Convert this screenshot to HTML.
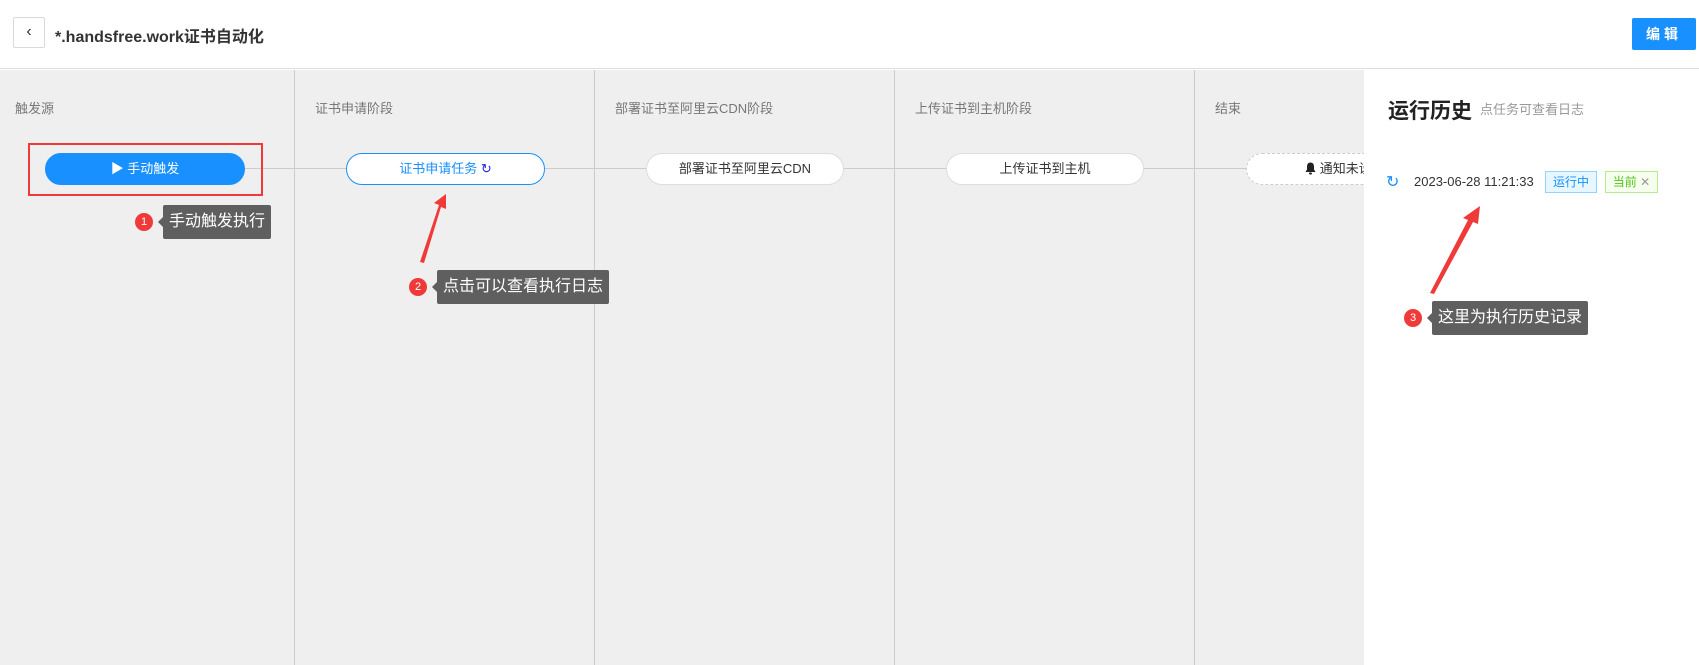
<!DOCTYPE html>
<html><head><meta charset="utf-8"><style>
*{margin:0;padding:0;box-sizing:border-box}
body{width:1699px;height:665px;overflow:hidden;background:#fff;font-family:"Liberation Sans","Noto Sans CJK SC",sans-serif;position:relative;color:#333}
.a{position:absolute}
.hdr{left:0;top:0;width:1699px;height:69px;border-bottom:1px solid #ddd;background:#fff}
.back{left:13px;top:17px;width:32px;height:31px;border:1px solid #d9d9d9;border-radius:2px;font-size:16px;text-align:center;line-height:28px;color:#333}
.title{left:55px;top:23px;font-size:16px;font-weight:bold;color:#333}
.edit{left:1632px;top:18px;width:64px;height:32px;background:#1890ff;color:#fff;font-size:14px;text-align:center;line-height:32px;border-radius:2px;letter-spacing:4px;font-weight:bold}
.main{left:0;top:70px;width:1364px;height:595px;background:#efefef;overflow:hidden}
.col{top:70px;width:1px;height:595px;background:#ccc}
.lbl{top:98px;font-size:13px;color:#777}
.line{left:245px;top:168px;width:1119px;height:1px;background:#ccc}
.node{top:153px;height:32px;border-radius:16px;background:#fff;border:1px solid #ddd;font-size:13px;text-align:center;line-height:30px;color:#333}
.tip{background:#5f5f5f;color:#fff;font-size:16px;height:34px;line-height:34px;padding:0 6px;border-radius:2px;white-space:nowrap}
.tip:before{content:"";position:absolute;left:-5px;top:12px;border:5px solid transparent;border-right-color:#5f5f5f;border-left:0}
.num{width:18px;height:18px;border-radius:50%;background:#f03a3a;color:#fff;font-size:11px;text-align:center;line-height:18px}
.panel{left:1364px;top:70px;width:335px;height:595px;background:#fff}
</style></head><body>
<div class="a hdr"></div>
<div class="a back">&#8249;</div>
<div class="a title">*.handsfree.work证书自动化</div>
<div class="a edit">编辑</div>
<div class="a main"></div>
<div class="a col" style="left:294px"></div>
<div class="a col" style="left:594px"></div>
<div class="a col" style="left:894px"></div>
<div class="a col" style="left:1194px"></div>
<div class="a lbl" style="left:15px">触发源</div>
<div class="a lbl" style="left:315px">证书申请阶段</div>
<div class="a lbl" style="left:615px">部署证书至阿里云CDN阶段</div>
<div class="a lbl" style="left:915px">上传证书到主机阶段</div>
<div class="a lbl" style="left:1215px">结束</div>
<div class="a line"></div>
<div class="a node" style="left:45px;width:200px;background:#1890ff;border-color:#1890ff;color:#fff">▶ 手动触发</div>
<div class="a" style="left:28px;top:143px;width:235px;height:53px;border:2px solid #f03a3a"></div>
<div class="a node" style="left:346px;width:199px;border-color:#1890ff;color:#1890ff">证书申请任务 <span style="color:#2222dd">↻</span></div>
<div class="a node" style="left:646px;width:198px">部署证书至阿里云CDN</div>
<div class="a node" style="left:946px;width:198px">上传证书到主机</div>
<div class="a node" style="left:1246px;width:198px;border-style:dashed;border-color:#ccc"><svg width="11" height="13" viewBox="0 0 11 13" style="vertical-align:-2px"><path d="M5.5 0.5c-2.3 0-3.5 1.8-3.5 4v3L0.5 10h10L9 7.5v-3c0-2.2-1.2-4-3.5-4z" fill="#222"/><rect x="4" y="10.5" width="3" height="2" rx="1" fill="#222"/></svg> 通知未设置</div>
<div class="a panel"></div>
<div class="a" style="left:1388px;top:95px;font-size:21px;font-weight:bold;color:#222">运行历史</div>
<div class="a" style="left:1480px;top:99px;font-size:13px;color:#999">点任务可查看日志</div>
<div class="a" style="left:1386px;top:172px;font-size:16px;color:#1890ff">↻</div>
<div class="a" style="left:1414px;top:174px;font-size:13px;color:#333">2023-06-28 11:21:33</div>
<div class="a" style="left:1545px;top:171px;width:52px;height:22px;border:1px solid #91d5ff;background:#e6f7ff;color:#1890ff;font-size:12px;text-align:center;line-height:20px">运行中</div>
<div class="a" style="left:1605px;top:171px;width:53px;height:22px;border:1px solid #b7eb8f;background:#f6ffed;color:#52c41a;font-size:12px;text-align:center;line-height:20px">当前 <span style="color:#999">✕</span></div>
<svg class="a" style="left:0;top:0" width="1699" height="665">
<polygon points="420,262 439,205 434,203 446,194 446,209 441,207 424,263" fill="#f03a3a"/>
<polygon points="1430,293 1468,220 1463,218 1480,206 1478,224 1473,222 1434,294" fill="#f03a3a"/>
</svg>
<div class="a num" style="left:135px;top:213px">1</div>
<div class="a tip" style="left:163px;top:205px">手动触发执行</div>
<div class="a num" style="left:409px;top:278px">2</div>
<div class="a tip" style="left:437px;top:270px">点击可以查看执行日志</div>
<div class="a num" style="left:1404px;top:309px">3</div>
<div class="a tip" style="left:1432px;top:301px">这里为执行历史记录</div>
</body></html>
